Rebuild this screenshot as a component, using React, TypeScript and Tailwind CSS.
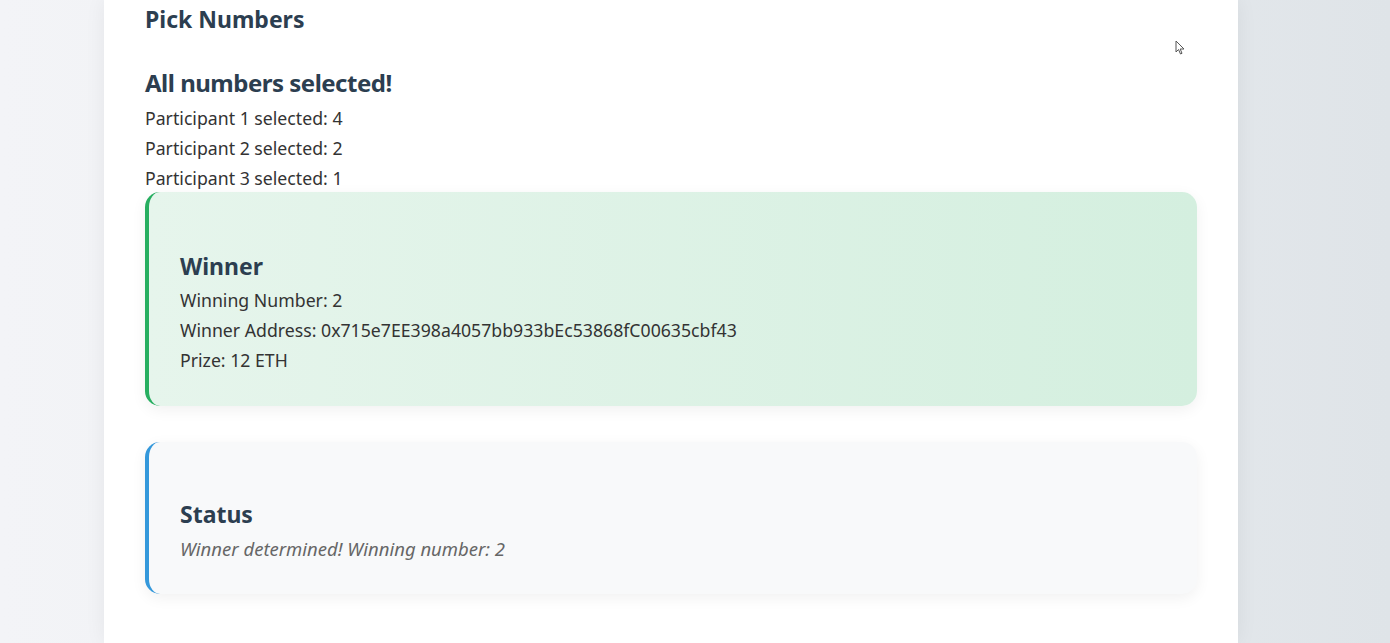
import React from "react";

export default function App() {
  const font = { fontFamily: '"Segoe UI", "Noto Sans", "Open Sans", sans-serif' };
  return (
    <div
      className="relative w-[1390px] h-[643px] overflow-hidden bg-[linear-gradient(90deg,#f3f4f7_0%,#eceef2_50%,#dfe4e8_100%)]"
      style={font}
    >
      <div className="ml-[104px] w-[1134px] h-[643px] bg-white px-[41px] shadow-[0_0_20px_rgba(0,0,0,0.06)]">
        <h2 className="text-[23px] font-bold text-[#2c3e50] leading-[30px] pt-[4px]">Pick Numbers</h2>
        <h3 className="mt-[33px] text-[24px] tracking-[-0.5px] font-bold text-[#2c3e50] leading-[32px]">All numbers selected!</h3>
        <div className="mt-[4px] text-[17.7px] text-[#333333] leading-[30px]">
          <p>Participant 1 selected: 4</p>
          <p>Participant 2 selected: 2</p>
          <p>Participant 3 selected: 1</p>
        </div>
        <div className="mt-[-1px] rounded-[15px] border-l-4 border-[#27ae60] bg-[linear-gradient(90deg,#e6f5ec_0%,#d4efdf_100%)] pl-[31px] pr-[30px] pt-[60px] pb-[31px] shadow-[0_4px_15px_rgba(0,0,0,0.06)]">
          <h3 className="text-[23px] font-bold text-[#2c3e50] leading-[28px]">Winner</h3>
          <div className="mt-[5px] text-[17.7px] text-[#333333] leading-[30px]">
            <p>Winning Number: 2</p>
            <p>Winner Address: 0x715e7EE398a4057bb933bEc53868fC00635cbf43</p>
            <p>Prize: 12 ETH</p>
          </div>
        </div>
        <div className="mt-[36px] rounded-[15px] border-l-4 border-[#3498db] bg-[#f8f9fa] pl-[31px] pr-[30px] pt-[58px] pb-[30px] shadow-[0_4px_15px_rgba(0,0,0,0.06)]">
          <h3 className="text-[23px] font-bold text-[#2c3e50] leading-[28px]">Status</h3>
          <p className="mt-[6px] text-[18.5px] italic text-[#666666] leading-[30px]">
            Winner determined! Winning number: 2
          </p>
        </div>
      </div>
      <svg className="absolute left-[1175px] top-[40px]" width="11" height="16" viewBox="0 0 11 16">
        <path d="M1 1 L1 12 L3.5 9.5 L5.5 14 L7 13.3 L5.2 9 L9 9 Z" fill="white" stroke="#555" strokeWidth="1" />
      </svg>
    </div>
  );
}
